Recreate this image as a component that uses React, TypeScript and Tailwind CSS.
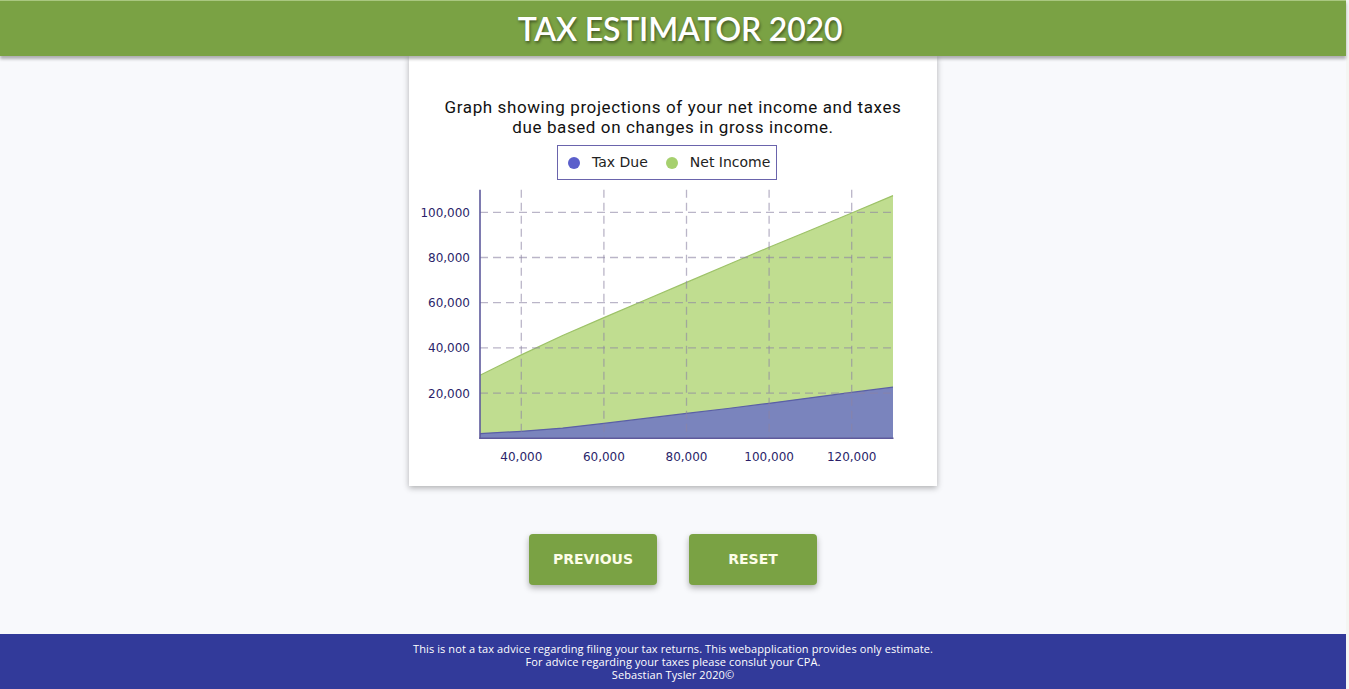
const GROSS = [30000, 40000, 50000, 60000, 70000, 80000, 90000, 100000, 110000, 120000, 130000];
const TAX = [2100, 3100, 4500, 6600, 8800, 11000, 13200, 15500, 17900, 20300, 22600];

const xScale = (v: number) => 71 + ((v - 30000) / 100000) * 413;
const yScale = (v: number) => 253.3 - (v / 100000) * 226;

function areaPath(values: number[]) {
  const top = GROSS.map((g, i) => `${xScale(g).toFixed(1)},${yScale(values[i]).toFixed(1)}`);
  return `M${xScale(30000)},${yScale(0)} L${top.join(" L")} L${xScale(130000)},${yScale(0)} Z`;
}

function linePath(values: number[]) {
  return "M" + GROSS.map((g, i) => `${xScale(g).toFixed(1)},${yScale(values[i]).toFixed(1)}`).join(" L");
}

function Chart() {
  const net = GROSS.map((g, i) => g - TAX[i]);
  const yTicks = [20000, 40000, 60000, 80000, 100000];
  const xTicks = [40000, 60000, 80000, 100000, 120000];
  const fmt = (n: number) => n.toLocaleString("en-US");

  return (
    <svg width={528} height={290} className="block" style={{ fontFamily: '"DejaVu Sans", Verdana, sans-serif' }}>
      {/* areas */}
      <path d={areaPath(net)} fill="#c0dd90" />
      <path d={linePath(net)} fill="none" stroke="#9dc268" strokeWidth={1.2} />
      <path d={areaPath(TAX)} fill="#7a84bd" />
      <path d={linePath(TAX)} fill="none" stroke="#5a5fa6" strokeWidth={1.2} />

      {/* grid */}
      {yTicks.map((t) => (
        <line
          key={t}
          x1={71}
          x2={484}
          y1={yScale(t)}
          y2={yScale(t)}
          stroke="#8c84a4"
          strokeOpacity={0.6}
          strokeWidth={1.3}
          strokeDasharray="8 5"
        />
      ))}
      {xTicks.map((t) => (
        <line
          key={t}
          x1={xScale(t)}
          x2={xScale(t)}
          y1={4.7}
          y2={253}
          stroke="#8c84a4"
          strokeOpacity={0.6}
          strokeWidth={1.3}
          strokeDasharray="8 5"
        />
      ))}

      {/* axes */}
      <line x1={71} x2={71} y1={4.7} y2={253.8} stroke="#5e5a9c" strokeWidth={1.6} />
      <line x1={70.2} x2={484.5} y1={253.3} y2={253.3} stroke="#5e5a9c" strokeWidth={1.6} />

      {yTicks.map((t) => (
        <text key={t} x={61} y={yScale(t) + 4.5} textAnchor="end" fontSize={12} fill="#2b1f6a">
          {fmt(t)}
        </text>
      ))}
      {xTicks.map((t) => (
        <text key={t} x={xScale(t)} y={276} textAnchor="middle" fontSize={12} fill="#2b1f6a">
          {fmt(t)}
        </text>
      ))}
    </svg>
  );
}

export default function App() {
  return (
    <div className="flex w-full bg-[#f4f6f3]">
      <div className="flex min-h-[689px] w-[1346px] flex-col bg-[#f8f9fc]">
        <header className="relative z-10 flex h-[56px] items-center justify-center border-t border-[#a9c780] bg-[#7aa244] pl-[14px] shadow-[0_3px_3px_rgba(0,0,0,0.3)]">
          <h1
            className="text-[32px] font-semibold tracking-[-0.2px] text-white [text-shadow:1px_2px_3px_rgba(0,0,0,0.45)]"
            style={{ fontFamily: 'Lato, "Open Sans", sans-serif' }}
          >
            TAX ESTIMATOR 2020
          </h1>
        </header>

        <main className="flex flex-1 flex-col items-center">
          <section className="w-[528px] bg-white pt-[41px] pb-[11px] shadow-[0_2px_6px_rgba(0,0,0,0.3)]">
            <div
              className="text-center text-[17px] font-normal tracking-[0.6px] text-[#111]"
              style={{ fontFamily: 'Roboto, "Open Sans", sans-serif' }}
            >
              <p className="h-[20px] leading-[20px]">Graph showing projections of your net income and taxes</p>
              <p className="h-[20px] leading-[20px]">due based on changes in gross income.</p>
            </div>
            <div className="mt-[8px] flex justify-center pr-[12px]">
              <div
                className="flex h-[35px] w-[220px] items-center border border-[#6a64ac] pl-[10px] text-[14px] text-[#222]"
                style={{ fontFamily: '"DejaVu Sans", Verdana, sans-serif' }}
              >
                <span className="flex items-center gap-[12px]">
                  <span className="h-[12px] w-[12px] rounded-full bg-[#5b5fcb]" />
                  Tax Due
                </span>
                <span className="ml-[18px] flex items-center gap-[12px]">
                  <span className="h-[12px] w-[12px] rounded-full bg-[#a6d06e]" />
                  Net Income
                </span>
              </div>
            </div>
            <div className="mt-[5px]">
              <Chart />
            </div>
          </section>

          <div className="mt-[48px] flex gap-[32px]">
            {["PREVIOUS", "RESET"].map((label) => (
              <button
                key={label}
                type="button"
                className="h-[51px] w-[128px] rounded-[4px] bg-[#7aa244] text-[14px] font-black text-[#fdfde8] shadow-[0_3px_6px_rgba(0,0,0,0.3)]"
                style={{ fontFamily: '"DejaVu Sans", "Liberation Sans", sans-serif' }}
              >
                {label}
              </button>
            ))}
          </div>
        </main>

        <footer
          className="mt-[47px] flex h-[55px] flex-col items-center justify-center bg-[#323a9a] text-center text-[11px] leading-[13px] font-medium tracking-[0.1px] text-white"
          style={{ fontFamily: '"Open Sans", "Noto Sans", sans-serif' }}
        >
          <p>This is not a tax advice regarding filing your tax returns. This webapplication provides only estimate.</p>
          <p>For advice regarding your taxes please conslut your CPA.</p>
          <p>Sebastian Tysler 2020©</p>
        </footer>
      </div>
    </div>
  );
}
